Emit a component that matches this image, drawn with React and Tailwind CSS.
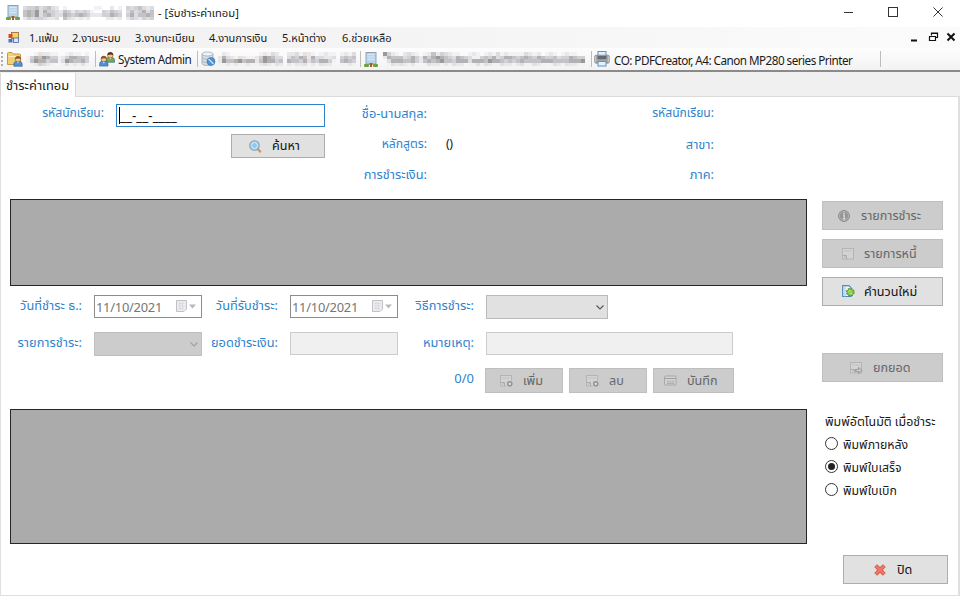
import React, { useState } from 'react';
import clsx from 'clsx';

const SHADES = {
  1: '#f3f1f2',
  2: '#e8e7e9',
  3: '#dddce0',
  4: '#d0d1d6',
  5: '#c2c2c7',
  6: '#b4b1b3',
  7: '#9c9897',
  a: '#ecdfd8',
  b: '#d9e3ec',
};

// censored text: one character per 4px cell
function Mosaic({ rows, width, height, className }) {
  const cols = rows[0].length;
  return (
    <svg
      width={width}
      height={height}
      viewBox={`0 0 ${cols} ${rows.length}`}
      preserveAspectRatio="none"
      shapeRendering="crispEdges"
      className={clsx('shrink-0', className)}
    >
      {rows.map((row, y) =>
        row.split('').map((c, x) =>
          SHADES[c] ? <rect key={`${x}-${y}`} x={x} y={y} width="1" height="1" fill={SHADES[c]} /> : null
        )
      )}
    </svg>
  );
}

const TITLE_ROWS = [
  '344534532.1.......11..2.1.4345323',
  '565736443254243431..43543.3534635',
  '5657356433654565422244654.4635565',
  '243443223.5321212....2212.2432434',
];

const USER_ROWS = ['..1a2211..1211.1', '1465764412466554', '1576645513765564', '.124321..1b121a1'];

const SERVER_ROWS = [
  '.21.......12132..2231a21.1211.1213',
  '26321a2112476533.354652633223.4545',
  '2755675662576645.655463546641.5654',
  '11212112112b21a2.2122b121a22..1121',
];

const SCHOOL_ROWS = [
  '7421.2321.125243211..121.12131211113212.121.1211..',
  '26555346426467654365431145463466545654654453446544',
  '.3666556425656755466636665766545456555566655556667',
  '.1b2a212..1b22121a22.11b1a211b2212a11b21.1b21a2211',
];

function BuildingIcon({ className }) {
  return (
    <svg width="14" height="15" viewBox="0 0 14 15" className={className}>
      <rect x="2" y="0.5" width="10" height="11.500" fill="#bcd4e9" stroke="#8fa3b8" />
      <path d="M3.5 2.5h7M3.5 5h7M3.5 7.5h7" stroke="#d5e6f4" />
      <rect x="0" y="12" width="5" height="3" rx="1" fill="#6f9f3e" />
      <rect x="9" y="12" width="5" height="3" rx="1" fill="#6f9f3e" />
      <rect x="5" y="11" width="4" height="2" fill="#c9905f" />
      <rect x="6" y="11" width="2" height="4" fill="#94603a" />
    </svg>
  );
}

function FormIcon() {
  return (
    <svg width="11" height="11" viewBox="0 0 11 11" className="shrink-0">
      <rect x="3.5" y="0.5" width="7" height="6" fill="#f7d368" stroke="#8a6a2a" strokeWidth="0.8" />
      <rect x="0.5" y="2" width="4" height="4" fill="#d9482b" />
      <rect x="0.5" y="7" width="4" height="3.5" fill="#4c74c9" />
      <rect x="5.5" y="6" width="5" height="4.5" fill="#dce6f6" stroke="#4563a5" strokeWidth="0.8" />
    </svg>
  );
}

function Person({ x, y, hair, body }) {
  return (
    <g transform={`translate(${x} ${y})`}>
      <path d="M0.3 10.300V8.2Q0.3 5.5 3 5.5H6Q8.7 5.5 8.7 8.2V10.300Z" fill={body} stroke="#33608f" strokeWidth="0.6" />
      <path d="M3.3 5.6L4.5 7.6L5.7 5.6" fill="#fff" />
      <circle cx="4.5" cy="3.2" r="2.8" fill="#f3c795" stroke="#7b4a1d" strokeWidth="0.6" />
      <path d="M1.7 3Q1.7 0.2 4.5 0.2T7.3 3Q5.6 1.8 1.7 3Z" fill={hair} />
    </g>
  );
}

function FolderUserIcon() {
  return (
    <svg width="16" height="16" viewBox="0 0 16 16" className="shrink-0">
      <path d="M0.5 2.5Q0.5 1.5 1.5 1.5H5L6.5 3H12.5Q13.5 3 13.5 4V13.5H0.5Z" fill="#f4cf72" stroke="#c9993f" />
      <path d="M1.5 5.5h11" stroke="#fdf0c0" />
      <Person x="6.5" y="5" hair="#8a5220" body="#4d92d4" />
    </svg>
  );
}

function UsersIcon() {
  return (
    <svg width="16" height="16" viewBox="0 0 16 16" className="shrink-0">
      <Person x="6.8" y="1" hair="#4a2f18" body="#6fae45" />
      <Person x="0.3" y="4.8" hair="#8a5220" body="#4d92d4" />
    </svg>
  );
}

function DatabaseIcon() {
  return (
    <svg width="15" height="16" viewBox="0 0 15 16" className="shrink-0">
      <path d="M1 3V12.5Q1 14.5 6.5 14.5T12 12.5V3" fill="#d6dde4" stroke="#9aa7b4" strokeWidth="0.8" />
      <ellipse cx="6.5" cy="3" rx="5.5" ry="2" fill="#f0f4f8" stroke="#9aa7b4" strokeWidth="0.8" />
      <path d="M1 6.5Q1 8.3 6.5 8.3T12 6.5M1 9.8Q1 11.5 6.5 11.5" fill="none" stroke="#9aa7b4" strokeWidth="0.7" />
      <circle cx="10" cy="10.5" r="4" fill="#4f93d2" stroke="#3673b0" strokeWidth="0.6" />
      <path d="M7.5 8L12.5 13" stroke="#d9ebfa" strokeWidth="1.1" />
    </svg>
  );
}

function PrinterIcon() {
  return (
    <svg width="16" height="16" viewBox="0 0 16 16" className="shrink-0">
      <rect x="4" y="0.5" width="8" height="6" fill="#e3f1fd" stroke="#5a94c8" />
      <rect x="0.7" y="4.2" width="14.6" height="8" rx="1.4" fill="#a2a6aa" stroke="#7d8186" strokeWidth="0.7" />
      <rect x="3.5" y="5" width="9" height="3.2" fill="#66696e" />
      <path d="M1.6 5.5v5.5M14.4 5.5v5.5" stroke="#c6c9cc" />
      <rect x="4" y="10.5" width="8" height="4.500" fill="#e3f1fd" stroke="#5a94c8" />
    </svg>
  );
}

function SearchIcon() {
  return (
    <svg width="13" height="13" viewBox="0 0 13 13" className="shrink-0">
      <path d="M8.5 9L11.3 11.6" stroke="#c79a5a" strokeWidth="2.2" strokeLinecap="round" />
      <circle cx="5.5" cy="5.5" r="4.7" fill="#a6d8f7" stroke="#8f9ba6" strokeWidth="1.1" />
      <circle cx="5.5" cy="5.5" r="2.9" fill="#8ac8f0" stroke="#d9f0fd" strokeWidth="0.8" />
    </svg>
  );
}

function InfoIcon() {
  return (
    <svg width="12" height="12" viewBox="0 0 12 12" className="shrink-0">
      <circle cx="6" cy="6" r="5.4" fill="#969696" stroke="#858585" />
      <circle cx="6" cy="6" r="4.6" fill="none" stroke="#b9b9b9" strokeWidth="0.8" />
      <path d="M6 2.6v1.3M5 5.2h1.2v3.6M4.8 8.9h2.6" stroke="#dedede" strokeWidth="1.2" fill="none" />
    </svg>
  );
}

// disabled form glyph, the badge in the corner tells the actions apart
function SheetIcon({ badge }) {
  return (
    <svg width="13" height="12" viewBox="0 0 13 12" className="shrink-0">
      <rect x="0.5" y="0.5" width="11" height="10.5" fill="#d3d3d3" stroke="#b4b4b4" />
      <path d="M2 3h8" stroke="#c0c0c0" />
      <path d="M1 7.5h3.5v3.5M2 9.5l1.5-1" stroke="#ababab" fill="none" />
      {badge === 'gear' && (
        <>
          <rect x="6.500" y="5.500" width="6.500" height="6.500" fill="#cfcfcf" />
          <circle cx="9.8" cy="8.8" r="2.1" fill="#d9d9d9" stroke="#919191" strokeWidth="1.4" />
        </>
      )}
      {badge === 'arrow' && (
        <path d="M5.5 7.4h3v-2l3.8 3.1L8.5 11.5v-2h-3z" fill="#c6c6c6" stroke="#959595" strokeWidth="0.9" />
      )}
    </svg>
  );
}

function SaveIcon() {
  return (
    <svg width="13" height="11" viewBox="0 0 13 11" className="shrink-0">
      <rect x="0.5" y="1" width="11.5" height="9" rx="1" fill="#d2d2d2" stroke="#a9a9a9" />
      <path d="M1 3.5h11M3 6.2h1.5M5.7 6.2h1.5M8.4 6.2h1.5M3 8.2h7" stroke="#a0a0a0" />
    </svg>
  );
}

function RecalcIcon() {
  return (
    <svg width="13" height="13" viewBox="0 0 13 13" className="shrink-0">
      <path d="M0.7 0.7H7L9 2.7V11.500H0.7Z" fill="#e9f4fc" stroke="#4b8cba" strokeWidth="1.2" />
      <path d="M3 1v10.5" stroke="#9cc6e2" />
      <circle cx="8.3" cy="7.2" r="3.4" fill="#7cc142" />
      <circle cx="8.3" cy="7.2" r="3.7" fill="none" stroke="#4f9426" strokeWidth="1.2" strokeDasharray="1.9 1" />
      <path d="M6.500 6.500L8 5.500L9.800 7.200M10 8L8.500 9L7 7.500" stroke="#d5efb8" strokeWidth="0.9" fill="none" />
    </svg>
  );
}

function CrossIcon() {
  return (
    <svg width="12" height="12" viewBox="0 0 12 12" className="shrink-0">
      <path d="M1.7 1.7L10.3 10.3M10.3 1.7L1.7 10.3" stroke="#cf5546" strokeWidth="4" />
      <path d="M2 2L10 10M10 2L2 10" stroke="#f4796a" strokeWidth="2.4" />
    </svg>
  );
}

function Chevron({ className }) {
  return (
    <svg width="8" height="5" viewBox="0 0 8 5" className={className}>
      <path d="M0.5 0.5L4 4L7.5 0.5" fill="none" stroke="currentColor" strokeWidth="1.1" />
    </svg>
  );
}

function Label({ className, size = 'text-[12.8px]', children }) {
  return (
    <div className={clsx('flex h-[20px] items-center justify-end whitespace-nowrap text-[#2f83cd]', size, className)}>
      {children}
    </div>
  );
}

function Button({ icon, disabled, className, children }) {
  return (
    <button
      disabled={disabled}
      className={clsx(
        'flex shrink-0 items-center whitespace-nowrap border text-[12.6px]',
        disabled ? 'border-[#bfbfbf] bg-[#cccccc] text-[#666666]' : 'border-[#adadad] bg-[#e1e1e1] text-[#111111]',
        className
      )}
    >
      {icon}
      {children}
    </button>
  );
}

function DateField({ value }) {
  return (
    <div className="flex h-[23px] w-[108px] items-center border border-[#8c8c8c] bg-white pl-px text-[12.9px] tracking-[-0.25px] text-[#767676]">
      <span className="w-[80px]">{value}</span>
      <svg width="21" height="13" viewBox="0 0 21 13">
        <path d="M0.5 0.5h10v8.5l-2.5 2.5h-7.5z" fill="#ececf0" stroke="#c2c2c6" />
        <path d="M2.5 3.5h6M2.5 6h6M2.5 8.5h5M4 2v8M6.5 2v8" stroke="#d5d5dc" strokeWidth="0.7" />
        <path d="M13 4.5h7l-3.5 4z" fill="#b9b9b9" />
      </svg>
    </div>
  );
}

const MENU = [
  { text: '1.แฟ้ม', w: 'w-[43px]' },
  { text: '2.งานระบบ', w: 'w-[63px]' },
  { text: '3.งานทะเบียน', w: 'w-[74px]' },
  { text: '4.งานการเงิน', w: 'w-[73px]' },
  { text: '5.หน้าต่าง', w: 'w-[60px]' },
  { text: '6.ช่วยเหลือ', w: 'w-[60px]' },
];

const PRINT_OPTIONS = ['พิมพ์ภายหลัง', 'พิมพ์ใบเสร็จ', 'พิมพ์ใบเบิก'];

function Separator({ className }) {
  return <div className={clsx('h-[16px] w-px shrink-0 bg-[#bdbdbd]', className)} />;
}

export default function App() {
  const [printMode, setPrintMode] = useState(1);

  return (
    <div className="flex h-[596px] w-[960px] flex-col overflow-hidden bg-white font-['Noto_Sans','Noto_Sans_Thai',sans-serif] text-[12px] leading-[20px] text-[#1a1a1a]">
      {/* title bar */}
      <div className="flex h-[27px] shrink-0 items-center pl-[6px]">
        <BuildingIcon className="mt-[-3px]" />
        <Mosaic rows={TITLE_ROWS} width={131} height={14} className="ml-[3px] mt-[-2px]" />
        <span className="ml-[4px] mt-[-2px] whitespace-nowrap text-[11.2px]">- [รับชำระค่าเทอม]</span>
        <svg width="106" height="12" viewBox="0 0 106 12" className="ml-auto mr-[11px] mt-[-3px] shrink-0" fill="none" stroke="#333333">
          <path d="M1 6.5h9" />
          <rect x="45.5" y="1.5" width="9" height="9" />
          <path d="M90.5 1.5l9 9M99.5 1.5l-9 9" />
        </svg>
      </div>

      {/* menu */}
      <div className="flex h-[21px] shrink-0 items-center bg-linear-to-r from-[#f0f0f0] to-[#fbfbfb] pl-[8px]">
        <FormIcon />
        <div className="ml-[10px] flex text-[11px]">
          {MENU.map((m) => (
            <div key={m.text} className={clsx('whitespace-nowrap', m.w)}>{m.text}</div>
          ))}
        </div>
        <svg width="48" height="10" viewBox="0 0 48 10" className="ml-auto mr-[3px] mt-[-2px]" fill="none" stroke="#111111">
          <path d="M2 8.500h6" strokeWidth="2" />
          <path d="M22.5 3.5v-2.5h6v4.5h-2M22 1.5h7" strokeWidth="1.2" />
          <path d="M20.5 4.5h6v4h-6zM20 4.5h7" strokeWidth="1.2" />
          <path d="M38.5 1.5l7 7M45.5 1.5l-7 7" strokeWidth="2" />
        </svg>
      </div>

      {/* toolbar */}
      <div className="flex h-[24px] shrink-0 items-center border-b-2 border-b-[#8a8a8a] bg-linear-to-b from-[#fdfdfd] to-[#f3f3f3] pl-px">
        <div className="h-[14px] w-[2px] border-l-2 border-dotted border-[#b0b0b0]" />
        <div className="ml-[4px] flex"><FolderUserIcon /></div>
        <Mosaic rows={USER_ROWS} width={63} height={14} className="ml-[3px]" />
        <Separator className="ml-[6px]" />
        <div className="ml-[3px] flex"><UsersIcon /></div>
        <span className="ml-[3px] w-[79px] whitespace-nowrap text-[11.7px] tracking-[-0.43px]">System Admin</span>
        <Separator />
        <div className="ml-[3px] flex"><DatabaseIcon /></div>
        <Mosaic rows={SERVER_ROWS} width={138} height={14} className="ml-[2px]" />
        <Separator className="ml-[4px]" />
        <BuildingIcon className="ml-[3px] shrink-0" />
        <Mosaic rows={SCHOOL_ROWS} width={202} height={14} className="ml-[5px]" />
        <Separator className="ml-[6px]" />
        <div className="ml-[2px] flex"><PrinterIcon /></div>
        <span className="ml-[4px] mt-px w-[266px] whitespace-nowrap text-[11.7px] tracking-[-0.52px]">CO: PDFCreator, A4: Canon MP280 series Printer</span>
        <Separator />
      </div>

      {/* tabs */}
      <div className="flex h-[25px] shrink-0 border-b border-b-[#dcdcdc] bg-[#f0f0f0]">
        <div className="mt-px h-[24px] w-[76px] shrink-0 whitespace-nowrap border-x border-x-[#d9d9d9] bg-white pl-[5px] pt-[2px] text-[12.9px]">
          ชำระค่าเทอม
        </div>
      </div>

      <div className="flex min-h-0 flex-1 flex-col border-b border-l border-r-2 border-[#dfdfdf] bg-white">
        {/* student */}
        <div className="flex h-[102px] shrink-0 pt-[6px]">
          <Label size="text-[12.1px]" className="w-[103px]">รหัสนักเรียน:</Label>
          <div className="ml-[12px] mt-px flex w-[209px] flex-col items-end">
            <div className="flex h-[23px] w-[209px] items-center border border-[#2f83cd] bg-white pl-[2px]">
              <div className="h-[17px] w-px bg-black" />
              <span className="text-[13.5px]">__-__-____</span>
            </div>
            <Button className="mt-[7px] h-[24px] w-[94px] pl-[17px]" icon={<SearchIcon />}>
              <span className="ml-[10px]">ค้นหา</span>
            </Button>
          </div>
          <div className="flex w-[102px] flex-col gap-[10.5px]">
            <Label>ชื่อ-นามสกุล:</Label>
            <Label size="text-[12.2px]">หลักสูตร:</Label>
            <Label>การชำระเงิน:</Label>
          </div>
          <div className="ml-[19px] mt-[31px] w-[59px] text-[12.5px] tracking-[-0.4px]">()</div>
          <div className="flex w-[209px] flex-col gap-[10.5px]">
            <Label size="text-[12.1px]">รหัสนักเรียน:</Label>
            <Label>สาขา:</Label>
            <Label>ภาค:</Label>
          </div>
        </div>

        <div className="flex min-h-0 flex-1 pl-[9px]">
          <div className="w-[797px] shrink-0">
            <div className="h-[87px] border border-[#262626] bg-[#ababab]" />

            <div className="flex h-[37px] pt-[9px]">
              <Label className="w-[72px]">วันที่ชำระ ธ.:</Label>
              <div className="ml-[12px]"><DateField value="11/10/2021" /></div>
              <Label className="w-[76px]">วันที่รับชำระ:</Label>
              <div className="ml-[12px]"><DateField value="11/10/2021" /></div>
              <Label className="w-[76px]">วิธีการชำระ:</Label>
              <div className="ml-[12px] flex h-[24px] w-[122px] items-center justify-end border border-[#bababa] bg-[#e1e1e1] pr-[3px] text-[#555555]">
                <Chevron />
              </div>
            </div>

            <div className="flex h-[37px] pt-[9px]">
              <Label className="w-[72px]">รายการชำระ:</Label>
              <div className="ml-[12px] flex h-[24px] w-[108px] items-center justify-end border border-[#bfbfbf] bg-[#cccccc] pr-[3px] text-[#a0a0a0]">
                <Chevron />
              </div>
              <Label className="w-[76px]">ยอดชำระเงิน:</Label>
              <div className="ml-[12px] h-[23px] w-[108px] border border-[#cccccc] bg-[#f0f0f0]" />
              <Label className="w-[76px]">หมายเหตุ:</Label>
              <div className="ml-[12px] h-[23px] w-[247px] border border-[#cccccc] bg-[#f0f0f0]" />
            </div>

            <div className="flex h-[49px] pt-[8px]">
              <Label size="text-[13px]" className="w-[464px]">0/0</Label>
              <div className="ml-[11px] flex gap-[6px]">
                <Button disabled className="h-[25px] w-[78px] pl-[14px]" icon={<SheetIcon badge="gear" />}>
                  <span className="ml-[10px]">เพิ่ม</span>
                </Button>
                <Button disabled className="h-[25px] w-[78px] pl-[16px]" icon={<SheetIcon badge="gear" />}>
                  <span className="ml-[10px]">ลบ</span>
                </Button>
                <Button disabled className="h-[25px] w-[81px] pl-[10px]" icon={<SaveIcon />}>
                  <span className="ml-[10px]">บันทึก</span>
                </Button>
              </div>
            </div>

            <div className="h-[135px] border border-[#262626] bg-[#ababab]" />
          </div>

          {/* actions */}
          <div className="ml-[15px] flex w-[126px] shrink-0 flex-col pt-[2px]">
            <Button disabled className="h-[29px] w-[121px] pl-[15px]" icon={<InfoIcon />}>
              <span className="ml-[11px]">รายการชำระ</span>
            </Button>
            <Button disabled className="mt-[9px] h-[29px] w-[121px] pl-[19px]" icon={<SheetIcon />}>
              <span className="ml-[9px]">รายการหนี้</span>
            </Button>
            <Button className="mt-[9px] h-[29px] w-[121px] pl-[19px]" icon={<RecalcIcon />}>
              <span className="ml-[9px]">คำนวนใหม่</span>
            </Button>
            <Button disabled className="mt-[47px] h-[29px] w-[121px] pl-[27px]" icon={<SheetIcon badge="arrow" />}>
              <span className="ml-[10px]">ยกยอด</span>
            </Button>

            <div className="ml-[3px] mt-[30px] whitespace-nowrap text-[12.4px]">พิมพ์อัตโนมัติ เมื่อชำระ</div>
            <div className="ml-[3px] mt-px text-[12.3px]">
              {PRINT_OPTIONS.map((text, i) => (
                <div key={text} className="flex h-[23px] items-center whitespace-nowrap" onClick={() => setPrintMode(i)}>
                  <div className="mt-[-2px] flex h-[13px] w-[13px] items-center justify-center rounded-full border border-[#333333] bg-white">
                    {printMode === i && <div className="h-[7px] w-[7px] rounded-full bg-[#222222]" />}
                  </div>
                  <span className="ml-[5px]">{text}</span>
                </div>
              ))}
            </div>

            <Button className="ml-[21px] mt-[53px] h-[29px] w-[105px] pl-[30px]" icon={<CrossIcon />}>
              <span className="ml-[11px]">ปิด</span>
            </Button>
          </div>
        </div>
      </div>
    </div>
  );
}
